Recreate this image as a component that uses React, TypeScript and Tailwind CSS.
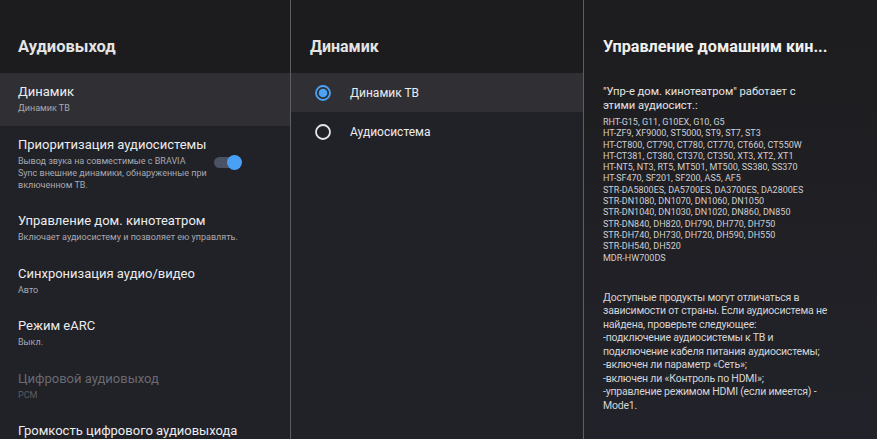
import React from 'react';

type Item = { title: string; sub?: string[]; disabled?: boolean; selected?: boolean; toggle?: boolean };

const items: Item[] = [
  { title: 'Динамик', sub: ['Динамик ТВ'], selected: true },
  {
    title: 'Приоритизация аудиосистемы',
    sub: ['Вывод звука на совместимые с BRAVIA', 'Sync внешние динамики, обнаруженные при', 'включенном ТВ.'],
    toggle: true,
  },
  { title: 'Управление дом. кинотеатром', sub: ['Включает аудиосистему и позволяет ею управлять.'] },
  { title: 'Синхронизация аудио/видео', sub: ['Авто'] },
  { title: 'Режим eARC', sub: ['Выкл.'] },
  { title: 'Цифровой аудиовыход', sub: ['PCM'], disabled: true },
  { title: 'Громкость цифрового аудиовыхода', sub: [''] },
];

const models = [
  'RHT-G15, G11, G10EX, G10, G5',
  'HT-ZF9, XF9000, ST5000, ST9, ST7, ST3',
  'HT-CT800, CT790, CT780, CT770, CT660, CT550W',
  'HT-CT381, CT380, CT370, CT350, XT3, XT2, XT1',
  'HT-NT5, NT3, RT5, MT501, MT500, SS380, SS370',
  'HT-SF470, SF201, SF200, AS5, AF5',
  'STR-DA5800ES, DA5700ES, DA3700ES, DA2800ES',
  'STR-DN1080, DN1070, DN1060, DN1050',
  'STR-DN1040, DN1030, DN1020, DN860, DN850',
  'STR-DN840, DH820, DH790, DH770, DH750',
  'STR-DH740, DH730, DH720, DH590, DH550',
  'STR-DH540, DH520',
  'MDR-HW700DS',
];

const notes = [
  'Доступные продукты могут отличаться в',
  'зависимости от страны. Если аудиосистема не',
  'найдена, проверьте следующее:',
  '-подключение аудиосистемы к ТВ и',
  'подключение кабеля питания аудиосистемы;',
  '-включен ли параметр «Сеть»;',
  '-включен ли «Контроль по HDMI»;',
  '-управление режимом HDMI (если имеется) -',
  'Mode1.',
];

function Radio({ on }: { on: boolean }) {
  return (
    <svg width="18" height="18" viewBox="0 0 18 18">
      <circle cx="9" cy="9" r="7" fill="none" stroke={on ? '#4aa3f7' : '#e6e6e6'} strokeWidth="1.8" />
      {on && <circle cx="9" cy="9" r="4.3" fill="#4aa3f7" />}
    </svg>
  );
}

export default function App() {
  return (
    <div className="flex w-[877px] h-[439px] overflow-hidden bg-[#202027] text-[#e8e8e8]"
      style={{ fontFamily: 'Roboto, "Noto Sans", sans-serif' }}>
      {/* left: settings list */}
      <div className="w-[291px] shrink-0 flex flex-col border-r border-[#5e5e62]">
        <div className="h-[73px] shrink-0 bg-[#1c1c1e] pl-[18px] pt-[35px]">
          <h1 className="text-[16.5px] leading-[24px] font-bold text-[#e4e4e4]">Аудиовыход</h1>
        </div>
        <div className="flex-1 bg-[#212128]">
          {items.map(it => (
            <div key={it.title}
              className={`flex items-start justify-between pl-[18px] pr-[49px] pt-[10px] pb-[11.5px] ${it.selected ? 'bg-[#2f2f34]' : ''}`}>
              <div>
                <div className={`text-[13px] leading-[17px] whitespace-nowrap ${it.disabled ? 'text-[#6a6a70]' : 'text-[#ececec]'}`}>{it.title}</div>
                {it.sub && (
                  <div className={`text-[9px] leading-[12px] mt-[2px] ${it.disabled ? 'text-[#5c5c62]' : 'text-[#a9a9ad]'}`}>
                    {it.sub.map((s, i) => <div key={i}>{s || '\u00a0'}</div>)}
                  </div>
                )}
              </div>
              {it.toggle && (
                <div className="relative mt-[21px] w-[27px] h-[11px] rounded-full bg-[#4b5263]">
                  <div className="absolute -right-[1px] -top-[2px] w-[15px] h-[15px] rounded-full bg-[#4aa0f5]" />
                </div>
              )}
            </div>
          ))}
        </div>
      </div>

      {/* middle: speaker choice */}
      <div className="w-[293px] shrink-0 flex flex-col border-r border-[#5e5e62]">
        <div className="h-[73px] shrink-0 bg-[#1c1c1e] pl-[19px] pt-[35px]">
          <h2 className="text-[16px] leading-[24px] font-bold text-[#e4e4e4]">Динамик</h2>
        </div>
        <div className="flex-1 bg-[#212128]">
          {[{ t: 'Динамик ТВ', on: true }, { t: 'Аудиосистема', on: false }].map(r => (
            <div key={r.t} className={`flex items-center h-[39px] pl-[23px] ${r.on ? 'bg-[#2f2f34]' : ''}`}>
              <Radio on={r.on} />
              <span className="ml-[18px] text-[12px] text-[#ececec]">{r.t}</span>
            </div>
          ))}
        </div>
      </div>

      {/* right: description */}
      <div className="flex-1 bg-gradient-to-b from-[#1d1d1f] to-[#22222a] pl-[19px] pt-[35px]">
        <h2 className="text-[16.2px] leading-[24px] font-bold text-[#f0f0f0] whitespace-nowrap">Управление домашним кин...</h2>
        <div className="mt-[26px] text-[11.2px] leading-[14px] text-[#e4e4e4]">
          <div>"Упр-е дом. кинотеатром" работает с</div>
          <div>этими аудиосист.:</div>
        </div>
        <div className="mt-[4px] text-[9px] leading-[11.3px] text-[#cfcfd2]">
          {models.map(m => <div key={m}>{m}</div>)}
        </div>
        <div className="mt-[27px] text-[10.5px] leading-[13.5px] tracking-[-0.2px] text-[#d4d4d6]">
          {notes.map(n => <div key={n}>{n}</div>)}
        </div>
      </div>
    </div>
  );
}
